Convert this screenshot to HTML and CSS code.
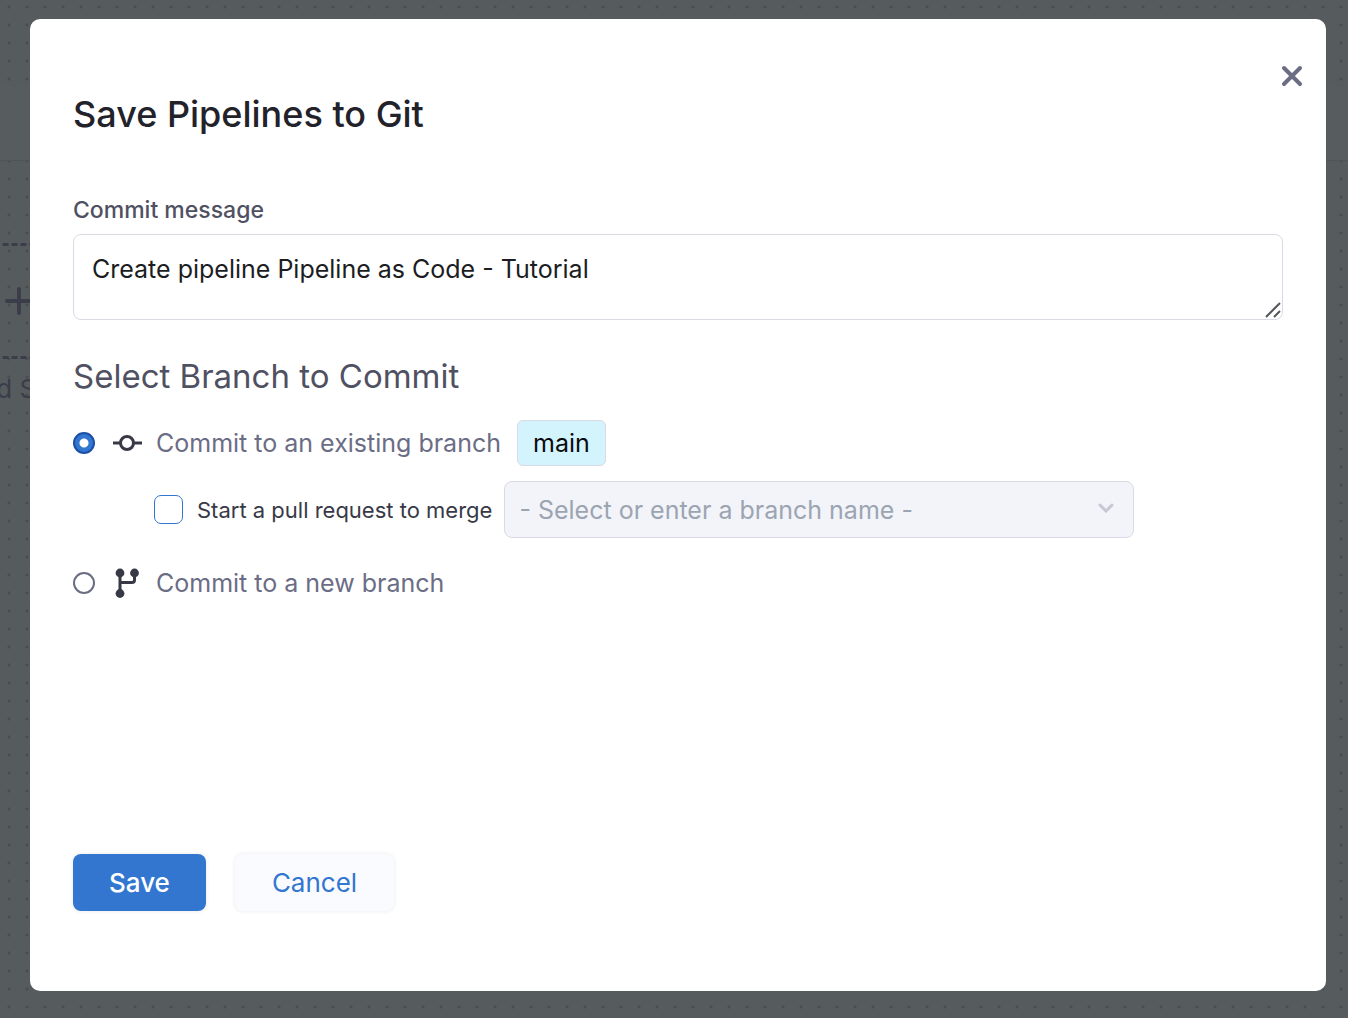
FILE: index.html
```html
<!DOCTYPE html>
<html lang="en">
<head>
<meta charset="utf-8">
<meta name="viewport" content="width=device-width, initial-scale=1">
<title>Save Pipelines to Git</title>
<link rel="stylesheet" href="styles.css">
</head>
<body>
<div class="app">
  <div class="studio" aria-hidden="true">
    <div class="studio-top"></div>
    <div class="studio-bar"></div>
    <div class="studio-canvas">
      <div class="node">
        <div class="node-box">
          <svg class="node-plus" viewBox="0 0 28 28"><path d="M14 2v24M2 14h24"/></svg>
        </div>
        <span class="node-label">Add Step</span>
      </div>
    </div>
  </div>

  <form class="dialog" role="dialog" aria-labelledby="dialog-title">
    <button class="close" type="button" aria-label="Close">
      <svg viewBox="0 0 22 22"><path d="M3 3l16 16M19 3L3 19"/></svg>
    </button>
    <h1 class="title" id="dialog-title">Save Pipelines to Git</h1>

    <label class="field-label" for="message">Commit message</label>
    <div class="message-wrap">
      <textarea class="message" id="message" rows="1">Create pipeline Pipeline as Code - Tutorial</textarea>
      <svg class="grip" viewBox="0 0 16 16"><path d="M1 15L15 1M9 15l6-6"/></svg>
    </div>

    <h2 class="subtitle">Select Branch to Commit</h2>

    <div class="option">
      <input class="radio" type="radio" name="branch" id="existing" checked>
      <label class="option-label" for="existing">
        <svg class="option-icon" viewBox="0 0 30 30"><path class="line" d="M1 15h8M21 15h9"/><circle class="line" cx="15" cy="15" r="6.5"/></svg>
        Commit to an existing branch
      </label>
      <span class="tag">main</span>
    </div>

    <div class="merge">
      <input class="checkbox" type="checkbox" id="pull">
      <label class="merge-label" for="pull">Start a pull request to merge</label>
      <div class="select-wrap">
        <select class="select" aria-label="Target branch" disabled>
          <option>- Select or enter a branch name -</option>
        </select>
        <svg class="chevron" viewBox="0 0 16 10"><path d="M2 2l6 6 6-6"/></svg>
      </div>
    </div>

    <div class="option">
      <input class="radio" type="radio" name="branch" id="new">
      <label class="option-label" for="new">
        <svg class="option-icon" viewBox="0 0 30 30"><path class="line" d="M8 5v20M8 14.500h12q2.500 0 2.500-2.500V5"/><circle cx="8" cy="5" r="4.400"/><circle cx="22.500" cy="5" r="4.400"/><circle cx="8" cy="25.500" r="4.400"/></svg>
        Commit to a new branch
      </label>
    </div>

    <div class="actions">
      <button class="button primary" type="submit">Save</button>
      <button class="button secondary" type="button">Cancel</button>
    </div>
  </form>
</div>
</body>
</html>
```
FILE: styles.css
```css
* {
  box-sizing: border-box;
}

body {
  margin: 0;
  font-family: Inter, "Liberation Sans", sans-serif;
  background: #565b5e;
}

.app {
  display: grid;
  min-height: 100vh;
}

.studio,
.dialog {
  grid-area: 1 / 1;
}

/* Dimmed pipeline canvas */
.studio {
  display: grid;
  grid-template-rows: 86px 75px 1fr;
  overflow: hidden;
}

.studio-top,
.studio-canvas {
  background: radial-gradient(circle, #484d50 1px, transparent 2px) 0 -2px / 18px 18px #565b5e;
}

.studio-bar {
  background: #575c5e;
  border-bottom: 1px solid #505557;
}

.studio-canvas {
  position: relative;
  background-position: 0 -9px;
}

.node {
  position: absolute;
  top: 82px;
  left: -51px;
  width: 140px;
  color: #3b3d4a;
  text-align: center;
}

.node-box {
  display: grid;
  place-items: center;
  height: 116px;
  border: 3px dashed #3b3d4a;
}

.node-plus {
  width: 28px;
  height: 28px;
  fill: none;
  stroke: #3b3d4a;
  stroke-width: 4;
  stroke-linecap: round;
}

.node-label {
  display: block;
  margin-top: 14px;
  font-size: 26px;
  line-height: 32px;
}

/* Dialog */
.dialog {
  position: relative;
  display: flex;
  flex-direction: column;
  margin: 19px 22px 27px 30px;
  padding: 71px 43px 80px;
  background: #fff;
  border-radius: 10px;
}

.close {
  position: absolute;
  top: 46px;
  right: 23px;
  width: 22px;
  height: 22px;
  padding: 0;
  border: 0;
  background: none;
}

.close svg {
  display: block;
  fill: none;
  stroke: #6b6d85;
  stroke-width: 4;
  stroke-linecap: round;
}

.title {
  margin: 0;
  color: #22222a;
  font-size: 36px;
  font-weight: 500;
  line-height: 48px;
}

.field-label {
  margin-top: 56px;
  color: #4f5162;
  font-size: 23px;
  font-weight: 500;
  line-height: 32px;
}

.message-wrap {
  position: relative;
  margin-top: 8px;
}

.message {
  display: block;
  width: 100%;
  height: 86px;
  padding: 18px;
  border: 1px solid #d9dae5;
  border-radius: 8px;
  background: #fff;
  color: #1b1d22;
  font: 25px/32px Inter, "Liberation Sans", sans-serif;
  resize: none;
  overflow: hidden;
}

.grip {
  position: absolute;
  right: 2px;
  bottom: 2px;
  width: 16px;
  height: 16px;
  fill: none;
  stroke: #55565a;
  stroke-width: 2;
  pointer-events: none;
}

.subtitle {
  margin: 36px 0 24px;
  color: #4f5162;
  font-size: 33px;
  font-weight: 400;
  line-height: 40px;
}

.option {
  display: flex;
  align-items: center;
  min-height: 46px;
}

.radio,
.checkbox {
  flex: none;
  margin: 0;
  appearance: none;
  background: #fff;
}

.radio {
  width: 22px;
  height: 22px;
  border: 2px solid #6b6d85;
  border-radius: 50%;
}

.radio:checked {
  border-color: #1b50a8;
  background: radial-gradient(circle, #fff 4px, #3376cf 5px);
}

.option-label {
  display: flex;
  align-items: center;
  gap: 14px;
  margin-left: 17px;
  color: #6b6d85;
  font-size: 25px;
  line-height: 32px;
}

.option-icon {
  width: 30px;
  height: 30px;
  fill: #383946;
}

.option-icon .line {
  fill: none;
  stroke: #383946;
  stroke-width: 3;
}

.tag {
  margin-left: 16px;
  padding: 6px 15px;
  border: 1px solid #d9dae5;
  border-radius: 6px;
  background: #d3f3fd;
  color: #0b0b0d;
  font-size: 25px;
  line-height: 32px;
}

.merge {
  display: flex;
  align-items: center;
  margin: 15px 0 22px 81px;
}

.checkbox {
  width: 29px;
  height: 29px;
  border: 1px solid #3376cf;
  border-radius: 7px;
}

.merge-label {
  margin: 0 12px 0 14px;
  color: #383946;
  font-size: 22px;
  line-height: 32px;
}

.select-wrap {
  position: relative;
  flex: 0 1 630px;
}

.select {
  display: block;
  width: 100%;
  height: 57px;
  padding: 0 14px;
  appearance: none;
  border: 1px solid #d9dae5;
  border-radius: 8px;
  background: #f3f3fa;
  color: #9ba5b1;
  font: 25px/32px Inter, "Liberation Sans", sans-serif;
  opacity: 1;
}

.chevron {
  position: absolute;
  top: 22px;
  right: 20px;
  width: 16px;
  height: 10px;
  fill: none;
  stroke: #c6c9d3;
  stroke-width: 3;
  stroke-linecap: round;
  pointer-events: none;
}

.actions {
  display: flex;
  gap: 29px;
  margin-top: auto;
}

.button {
  height: 57px;
  padding: 0 36px;
  border: 0;
  border-radius: 8px;
  font: 500 26px/32px Inter, "Liberation Sans", sans-serif;
  box-shadow: 0 0 4px rgba(40, 41, 61, 0.1);
}

.primary {
  background: #3376cf;
  color: #fff;
}

.secondary {
  padding: 0 37px;
  background: #fafbfe;
  color: #3376cf;
  font-weight: 400;
}
```
